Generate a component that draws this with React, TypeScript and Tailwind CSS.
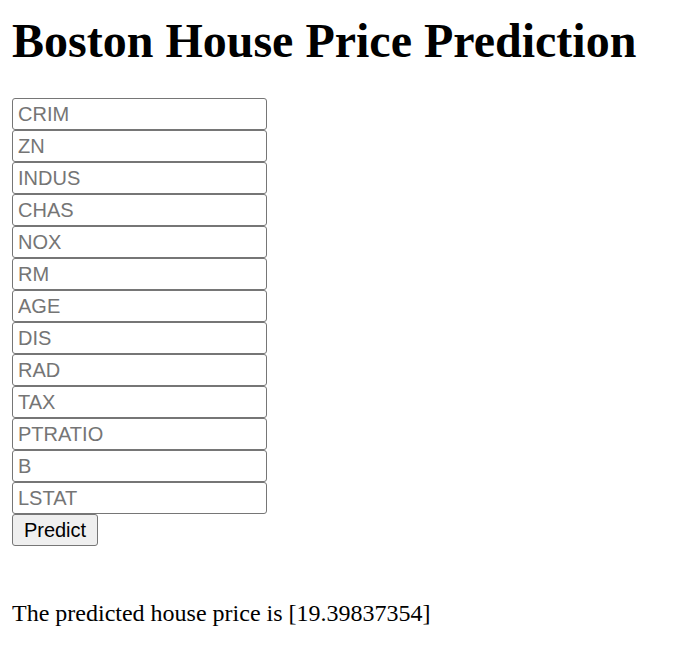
import React from 'react';

const fields = ['CRIM', 'ZN', 'INDUS', 'CHAS', 'NOX', 'RM', 'AGE', 'DIS', 'RAD', 'TAX', 'PTRATIO', 'B', 'LSTAT'];

export default function App() {
  return (
    <div className="min-h-screen bg-white px-[12px] text-black">
      <h1 className="pt-[13px] font-['Liberation_Serif',serif] text-[48px] font-bold leading-[55px]">
        Boston House Price Prediction
      </h1>

      <form className="mt-[30px] flex flex-col items-start" onSubmit={(e) => e.preventDefault()}>
        {fields.map((f) => (
          <input
            key={f}
            type="text"
            name={f}
            placeholder={f}
            className="h-[32px] w-[255px] rounded-[3px] border border-[#767676] bg-white px-[5px] font-['Liberation_Sans',Arial,sans-serif] text-[20px] text-black placeholder:text-[#757575] outline-none"
          />
        ))}
        <button
          type="submit"
          className="h-[32px] w-[86px] rounded-[3px] border border-[#767676] bg-[#efefef] font-['Liberation_Sans',Arial,sans-serif] text-[20px] text-black"
        >
          Predict
        </button>
      </form>

      <p className="mt-[53px] font-['Liberation_Serif',serif] text-[24px] leading-[28px]">
        The predicted house price is [19.39837354]
      </p>
    </div>
  );
}
